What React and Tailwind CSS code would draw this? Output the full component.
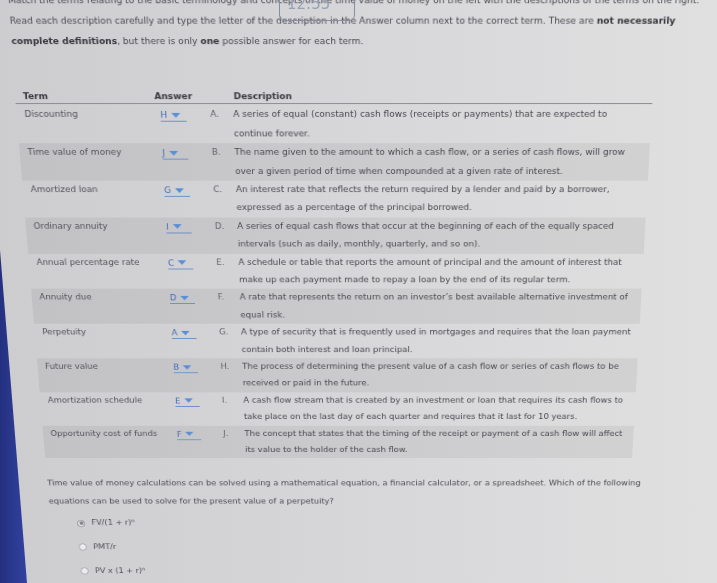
import React from "react";

const rows = [
  ["Discounting", "H", "A.", "A series of equal (constant) cash flows (receipts or payments) that are expected to", "continue forever."],
  ["Time value of money", "J", "B.", "The name given to the amount to which a cash flow, or a series of cash flows, will grow", "over a given period of time when compounded at a given rate of interest."],
  ["Amortized loan", "G", "C.", "An interest rate that reflects the return required by a lender and paid by a borrower,", "expressed as a percentage of the principal borrowed."],
  ["Ordinary annuity", "I", "D.", "A series of equal cash flows that occur at the beginning of each of the equally spaced", "intervals (such as daily, monthly, quarterly, and so on)."],
  ["Annual percentage rate", "C", "E.", "A schedule or table that reports the amount of principal and the amount of interest that", "make up each payment made to repay a loan by the end of its regular term."],
  ["Annuity due", "D", "F.", "A rate that represents the return on an investor\u2019s best available alternative investment of", "equal risk."],
  ["Perpetuity", "A", "G.", "A type of security that is frequently used in mortgages and requires that the loan payment", "contain both interest and loan principal."],
  ["Future value", "B", "H.", "The process of determining the present value of a cash flow or series of cash flows to be", "received or paid in the future."],
  ["Amortization schedule", "E", "I.", "A cash flow stream that is created by an investment or loan that requires its cash flows to", "take place on the last day of each quarter and requires that it last for 10 years."],
  ["Opportunity cost of funds", "F", "J.", "The concept that states that the timing of the receipt or payment of a cash flow will affect", "its value to the holder of the cash flow."],
];

function Caret() {
  return (
    <svg width="9" height="5" viewBox="0 0 9 5" className="ml-[4px]">
      <path d="M0 0 H9 L4.5 5 Z" fill="#5a8fd6" />
    </svg>
  );
}

function Radio({ checked }) {
  return (
    <span
      className={
        "flex h-[9px] w-[9px] items-center justify-center rounded-full border " +
        (checked ? "border-[#8a8a8f] bg-[#e2e2e4]" : "border-[#a2a2a7] bg-[#ececee]")
      }
    >
      {checked ? <span className="h-[4px] w-[4px] rounded-full bg-[#7a7a80]" /> : null}
    </span>
  );
}

export default function App() {
  return (
    <div className="relative h-[583px] w-[717px] overflow-hidden bg-linear-to-r from-[#cdcdd0] via-[#d7d7d9] to-[#e0e0e1] font-['DejaVu_Sans',sans-serif] text-[9px] text-[#47474e]">
      <div className="relative h-[700px] w-[717px] [transform:perspective(800px)_rotateX(-10deg)] [transform-origin:394px_115px]">
        <div className="ml-[17px] mt-[-7px] text-[#4a4a51]">
          <div className="whitespace-nowrap leading-[17.5px]">
            Match the terms relating to the basic terminology and concepts of the time value of money on the left with the descriptions of the terms on the right.
          </div>
          <div className="whitespace-nowrap leading-[20.5px]">
            Read each description carefully and type the letter of the description in the Answer column next to the correct term. These are{" "}
            <b className="text-[#36363c]">not necessarily</b>
          </div>
          <div className="whitespace-nowrap leading-[20.5px]">
            <b className="text-[#36363c]">complete definitions</b>, but there is only <b className="text-[#36363c]">one</b> possible answer for each term.
          </div>
        </div>

        <div className="ml-[16px] mt-[37.6px] w-[636px]">
          <div className="flex h-[15px] border-b border-[#8c8c90] font-bold leading-[15px] text-[#38383e]">
            <div className="w-[139px] pl-[8px]">Term</div>
            <div className="w-[78px]">Answer</div>
            <div className="pl-[1px]">Description</div>
          </div>
          <div className="mt-[1.4px]">
            {rows.map((r, i) => (
              <div
                key={r[0]}
                className={"flex h-[38.8px] leading-[19.4px] " + (i % 2 === 1 ? "bg-black/[0.055]" : "")}
              >
                <div className="w-[139px] whitespace-nowrap pl-[8px] text-[#505057]">{r[0]}</div>
                <div className="w-[51px] pl-[5px]">
                  <div className="mt-[4px] flex h-[13px] w-[26px] items-center border-b border-[#6a8ec8] leading-[12px] text-[#4169b0]">
                    <span>{r[1]}</span>
                    <Caret />
                  </div>
                </div>
                <div className="w-[27px] pl-[4px] text-[#606067]">{r[2]}</div>
                <div className="flex-1 whitespace-nowrap">
                  <div>{r[3]}</div>
                  <div>{r[4]}</div>
                </div>
              </div>
            ))}
          </div>
        </div>

        <div className="ml-[16px] mt-[18.1px] leading-[22.9px] text-[#4a4a51]">
          <div className="whitespace-nowrap">
            Time value of money calculations can be solved using a mathematical equation, a financial calculator, or a spreadsheet. Which of the following
          </div>
          <div className="whitespace-nowrap">equations can be used to solve for the present value of a perpetuity?</div>
        </div>

        <div className="text-[#505057]">
          <div className="flex h-[29.75px] items-center pl-[45px]">
            <Radio checked />
            <span className="ml-[7px]">
              FV/(1 + r)<sup className="text-[6px]">n</sup>
            </span>
          </div>
          <div className="flex h-[29.75px] items-center pl-[45px]">
            <Radio />
            <span className="ml-[7px]">PMT/r</span>
          </div>
          <div className="flex h-[29.75px] items-center pl-[45px]">
            <Radio />
            <span className="ml-[7px]">
              PV x (1 + r)<sup className="text-[6px]">n</sup>
            </span>
          </div>
        </div>
      </div>

      <div className="absolute left-[279px] top-[-10px] h-[31px] w-[76px] rounded-[6px] border-[1.5px] border-[#8390a3]" />
      <div className="absolute left-[287px] top-[-3px] text-[15px] leading-[15px] text-[#96a3b7]">12:55</div>

      <svg className="absolute left-0 top-0" width="717" height="583" viewBox="0 0 717 583">
        <defs>
          <linearGradient id="bz" x1="0" y1="0" x2="1" y2="0">
            <stop offset="0" stopColor="#24307f" />
            <stop offset="1" stopColor="#3242a0" />
          </linearGradient>
        </defs>
        <polygon points="0,250 27,583 0,583" fill="url(#bz)" />
      </svg>
    </div>
  );
}
